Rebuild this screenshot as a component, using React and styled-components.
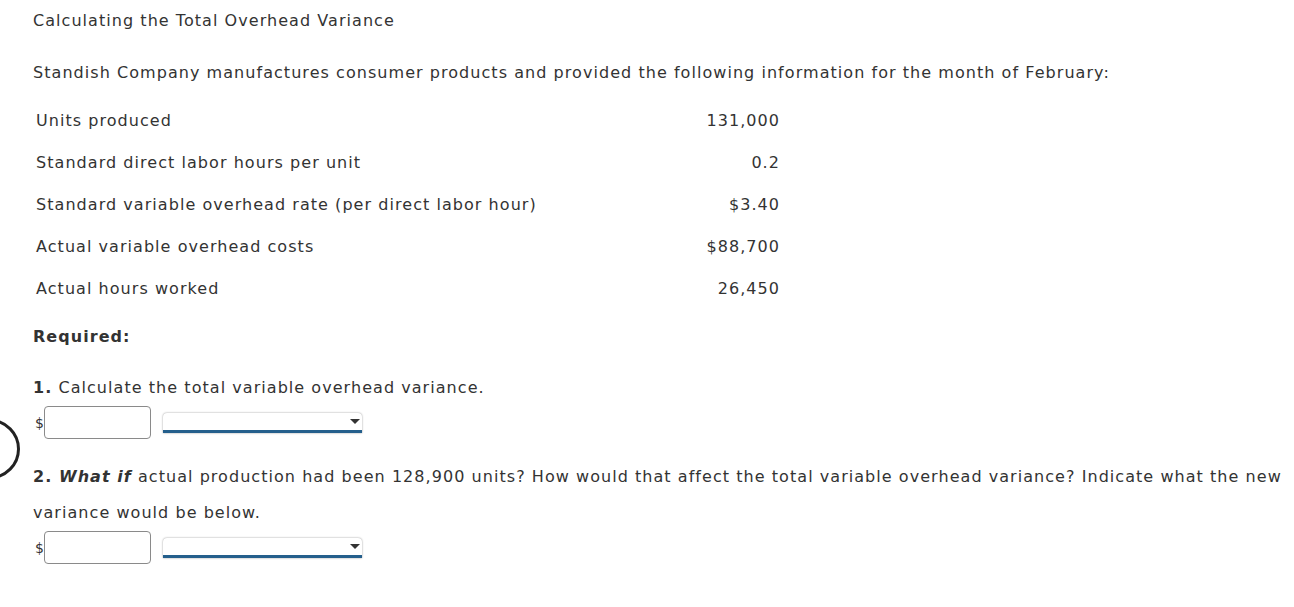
import React from "react";
import styled, { createGlobalStyle } from "styled-components";

const GlobalStyle = createGlobalStyle`
    body {
        margin: 0;
        background: #fff;
        font-family: "DejaVu Sans", Verdana, sans-serif;
        color: #333;
    }
`
const Page = styled.div`
    position: relative;
    padding: 11px 0 0 33px;
    font-size: 16px;
    letter-spacing: 1.05px;
    overflow: hidden;
    height: 607px;
    box-sizing: border-box;
`
const Title = styled.div`
    line-height: 20px;
    margin-bottom: 32px;
`
const Paragraph = styled.p`
    margin: 0;
    line-height: 20px;
`
const DataTable = styled.div`
    display: grid;
    grid-template-columns: 1fr auto;
    width: 744px;
    margin: 17px 0 0 3px;
`
const Label = styled.div`
    height: 42px;
    line-height: 42px;
`
const Value = styled.div`
    height: 42px;
    line-height: 42px;
    text-align: right;
`
const Heading = styled.div`
    font-weight: bold;
    line-height: 20px;
    margin: 17px 0 31px;
`
const Question = styled.div`
    line-height: ${props => props.lh || "20px"};
    margin-top: ${props => props.mt || "0"};
    padding-right: 10px;
`
const AnswerRow = styled.div`
    display: flex;
    align-items: center;
    height: 33px;
    margin: ${props => props.mt || "8px"} 0 0 2px;
`
const Dollar = styled.span`
    font-size: 14px;
    letter-spacing: 0;
    width: 9px;
`
const AmountInput = styled.div`
    width: 107px;
    height: 33px;
    box-sizing: border-box;
    border: 1px solid #8a8a8a;
    border-radius: 4px;
    background: #fff;
`
const Select = styled.div`
    position: relative;
    margin-left: 12px;
    width: 199px;
    height: 20px;
    box-sizing: border-box;
    background: #fff;
    border-radius: 4px 4px 0 0;
    box-shadow: 0 0 2px rgba(0, 0, 0, 0.45);
    border-bottom: 3px solid #245f8c;
`
const Caret = styled.span`
    position: absolute;
    right: 2px;
    top: 6px;
    width: 0;
    height: 0;
    border-left: 5px solid transparent;
    border-right: 5px solid transparent;
    border-top: 5px solid #333;
`
const SideCircle = styled.div`
    position: absolute;
    left: -40px;
    top: 419px;
    width: 54px;
    height: 54px;
    border: 3px solid #222;
    border-radius: 50%;
`

const rows = [
    ["Units produced", "131,000"],
    ["Standard direct labor hours per unit", "0.2"],
    ["Standard variable overhead rate (per direct labor hour)", "$3.40"],
    ["Actual variable overhead costs", "$88,700"],
    ["Actual hours worked", "26,450"],
]

function Answer({ mt }) {
    return (
        <AnswerRow mt={mt}>
            <Dollar>$</Dollar>
            <AmountInput />
            <Select>
                <Caret />
            </Select>
        </AnswerRow>
    )
}

export default function App() {
    return (
        <Page>
            <GlobalStyle />
            <SideCircle />
            <Title>Calculating the Total Overhead Variance</Title>
            <Paragraph>
                Standish Company manufactures consumer products and provided the following information for the month of February:
            </Paragraph>
            <DataTable>
                {rows.map(([label, value]) => (
                    <React.Fragment key={label}>
                        <Label>{label}</Label>
                        <Value>{value}</Value>
                    </React.Fragment>
                ))}
            </DataTable>
            <Heading>Required:</Heading>
            <Question>
                <b>1.</b> Calculate the total variable overhead variance.
            </Question>
            <Answer />
            <Question lh="36px" mt="20px">
                <b>2. <i>What if</i></b> actual production had been 128,900 units? How would that affect the total variable overhead variance? Indicate what the new variance would be below.
            </Question>
            <Answer mt="0px" />
        </Page>
    )
}
